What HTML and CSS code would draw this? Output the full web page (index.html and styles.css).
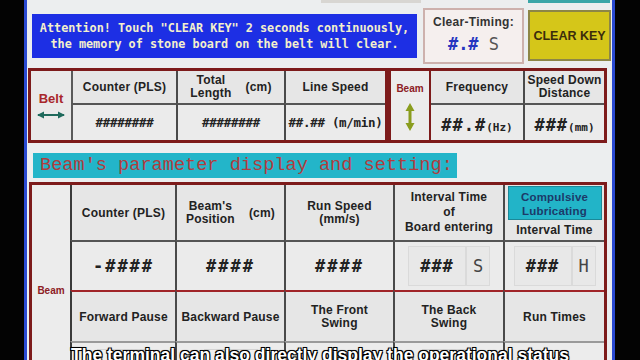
FILE: index.html
```html
<!DOCTYPE html>
<html lang="en">
<head>
    <meta charset="UTF-8">
    <meta name="viewport" content="width=device-width, initial-scale=1.0">
    <title>Belt and Beam Parameters</title>
    <link rel="stylesheet" href="styles.css">
</head>
<body>
    <div class="screen">
        <div class="top-strip">
            <span class="strip-grey"></span>
            <span class="strip-teal"></span>
        </div>

        <div class="top-row">
            <div class="banner">Attention! Touch "CLEAR KEY" 2 seconds continuously,<br>the memory of stone board on the belt will clear.</div>
            <div class="timing">
                <div class="timing-label">Clear-Timing:</div>
                <div class="timing-value"><span class="blue">#.#</span> S</div>
            </div>
            <div class="clear-key">CLEAR KEY</div>
        </div>

        <div class="belt-row">
            <div class="grid belt">
                <div class="cell side">
                    <span class="side-label">Belt</span>
                    <svg class="belt-arrow" width="30" height="8" viewBox="0 0 30 8">
                        <path d="M2 4 H28" stroke="#1f6a5c" stroke-width="2"/>
                        <path d="M1 4 L8 0.5 L8 7.5 Z M29 4 L22 0.5 L22 7.5 Z" fill="#1f6a5c"/>
                    </svg>
                </div>
                <div class="cell head">Counter (PLS)</div>
                <div class="cell head split"><span class="two-line">Total<br>Length</span><span>(cm)</span></div>
                <div class="cell head">Line Speed</div>
                <div class="cell val">########</div>
                <div class="cell val">########</div>
                <div class="cell val">##.## (m/min)</div>
            </div>

            <div class="grid beam-small">
                <div class="cell side red-side">
                    <span class="side-label small">Beam</span>
                    <svg class="beam-arrow" width="10" height="28" viewBox="0 0 10 28">
                        <path d="M5 3 V25" stroke="#8a9d1e" stroke-width="3"/>
                        <path d="M5 0 L9.5 8 L0.5 8 Z M5 28 L9.5 20 L0.5 20 Z" fill="#8a9d1e"/>
                    </svg>
                </div>
                <div class="cell head">Frequency</div>
                <div class="cell head two-line">Speed Down<br>Distance</div>
                <div class="cell val big">##.#<small>(Hz)</small></div>
                <div class="cell val big">###<small>(mm)</small></div>
            </div>
        </div>

        <div class="section-title">Beam's parameter display and setting:</div>

        <div class="grid beam">
            <div class="cell side beam-side"><span class="side-label small">Beam</span></div>

            <div class="cell head">Counter (PLS)</div>
            <div class="cell head split"><span class="two-line">Beam's<br>Position</span><span>(cm)</span></div>
            <div class="cell head two-line">Run Speed<br>(mm/s)</div>
            <div class="cell head three-line">Interval Time<br>of<br>Board entering</div>
            <div class="cell head lube-cell">
                <div class="lube">Compulsive<br>Lubricating</div>
                <div class="lube-caption">Interval Time</div>
            </div>

            <div class="cell num">-####</div>
            <div class="cell num">####</div>
            <div class="cell num">####</div>
            <div class="cell boxed">
                <span class="inset wide">###</span><span class="inset unit">S</span>
            </div>
            <div class="cell boxed">
                <span class="inset wide">###</span><span class="inset unit">H</span>
            </div>

            <div class="cell head red-top">Forward Pause</div>
            <div class="cell head red-top">Backward Pause</div>
            <div class="cell head red-top two-line">The Front<br>Swing</div>
            <div class="cell head red-top two-line">The Back<br>Swing</div>
            <div class="cell head red-top">Run Times</div>

            <div class="cell low"><span class="pad"></span></div>
            <div class="cell low"><span class="pad"></span></div>
            <div class="cell low"></div>
            <div class="cell low"><span class="pad"></span></div>
            <div class="cell low"></div>
        </div>
    </div>

    <div class="subtitle">The terminal can also directly display the operational status</div>
</body>
</html>
```

FILE: styles.css
```css
body {
    margin: 0;
    width: 640px;
    height: 360px;
    overflow: hidden;
    background-color: #030303;
    font-family: "Liberation Sans", Arial, sans-serif;
    position: relative;
}
.screen {
    margin-left: 24px;
    width: 591px;
    height: 360px;
    box-sizing: border-box;
    border-left: 3px solid #2a4ad2;
    border-right: 3px solid #2a4ad2;
    background-color: #eceeef;
    overflow: hidden;
}
.top-strip {
    display: flex;
    height: 3px;
}
.strip-grey {
    margin-left: 294px;
    width: 100px;
    background-color: #d8d6d2;
}
.strip-teal {
    margin-left: 107px;
    width: 82px;
    background-color: #3aa6a8;
}
.top-row {
    display: flex;
    align-items: center;
    height: 57px;
    margin-top: 4px;
}
.banner {
    margin-left: 5px;
    width: 385px;
    height: 44px;
    box-sizing: border-box;
    padding-top: 6px;
    background-color: #1d2fe4;
    color: #f4f0cc;
    font-family: "DejaVu Sans Mono", monospace;
    font-weight: bold;
    font-size: 11.8px;
    line-height: 16px;
    text-align: center;
    letter-spacing: 0;
    white-space: nowrap;
}
.timing {
    margin-left: 6px;
    width: 101px;
    height: 56px;
    box-sizing: border-box;
    border: 2px solid #cdb1ad;
    background-color: #f5efee;
    text-align: center;
    padding-top: 5px;
}
.timing-label {
    font-size: 12px;
    font-weight: bold;
    color: #333;
    letter-spacing: 0.3px;
}
.timing-value {
    margin-top: 5px;
    font-family: "DejaVu Sans Mono", monospace;
    font-size: 17px;
    color: #555;
}
.timing-value .blue {
    color: #2436c0;
    font-weight: bold;
}
.clear-key {
    margin-left: 4px;
    width: 83px;
    height: 51px;
    box-sizing: border-box;
    border: 2px solid #8d8646;
    background-color: #d5c619;
    color: #3b2c0c;
    font-size: 12.5px;
    font-weight: bold;
    display: flex;
    align-items: center;
    justify-content: center;
}
.belt-row {
    display: flex;
    margin-top: 4px;
    margin-left: 1px;
    height: 75px;
}
.grid {
    display: grid;
    box-sizing: border-box;
    border: 3px solid #7d1b1b;
    background-color: #e9e9e9;
}
.belt {
    width: 360px;
    grid-template-columns: 40px 105px 108px 1fr;
    grid-template-rows: 32px 1fr;
}
.beam-small {
    width: 219px;
    grid-template-columns: 40px 92px 1fr;
    grid-template-rows: 32px 1fr;
}
.cell {
    display: flex;
    align-items: center;
    justify-content: center;
    text-align: center;
    border-left: 2px solid #4a4a4a;
    border-top: 2px solid #555;
    color: #222;
    font-size: 12px;
    font-weight: bold;
    line-height: 12px;
}
.head {
    background-color: #e6e6e6;
    letter-spacing: 0.2px;
}
.belt .head, .beam-small .head, .beam > .cell:nth-child(-n+6) {
    border-top: none;
}
.side {
    grid-row: span 2;
    border: none;
    flex-direction: column;
    gap: 6px;
}
.side-label {
    color: #a8262a;
    font-size: 13px;
}
.side-label.small {
    font-size: 10px;
    color: #8c2024;
}
.red-side {
    border-right: 2px solid #7d1b1b;
    background-color: #ececec;
    justify-content: flex-start;
    padding-top: 12px;
    gap: 8px;
}
.beam-small .head:nth-child(2), .beam-small .val:nth-child(4) {
    border-left: none;
}
.belt .head:nth-child(2), .belt .val:nth-child(5) {
    border-left: 2px solid #5a5a5a;
}
.val {
    font-family: "DejaVu Sans Mono", monospace;
    font-size: 12.5px;
    letter-spacing: -0.3px;
    background-color: #ebebeb;
}
.val.big {
    font-size: 17px;
    letter-spacing: 1px;
    align-items: baseline;
    padding-top: 14px;
    justify-content: center;
}
.val.big small {
    font-size: 11px;
    letter-spacing: 0;
}
.split {
    gap: 14px;
}
.two-line, .three-line {
    line-height: 13px;
}
.three-line {
    line-height: 15px;
}
.section-title {
    margin-top: 10px;
    margin-left: 6px;
    width: 424px;
    height: 25px;
    box-sizing: border-box;
    padding-left: 7px;
    background-color: #23b5c9;
    color: #b23c3e;
    font-family: "Liberation Mono", "Courier New", monospace;
    font-size: 18.6px;
    line-height: 25px;
    white-space: nowrap;
}
.beam {
    margin-top: 4px;
    margin-left: 2px;
    width: 578px;
    height: 214px;
    grid-template-columns: 38px 105px 109px 109px 110px 1fr;
    grid-template-rows: 55px 50px 51px 1fr;
    border-bottom: none;
}
.beam-side {
    grid-row: span 4;
    background-color: #ececec;
    border-right: none;
}
.beam > .cell:nth-child(2), .beam > .cell:nth-child(7), .beam > .cell:nth-child(12), .beam > .cell:nth-child(17) {
    border-left: 2px solid #3a3a3a;
}
.lube-cell {
    flex-direction: column;
    justify-content: flex-start;
    padding-top: 1px;
}
.lube {
    width: 94px;
    height: 34px;
    box-sizing: border-box;
    background-color: #22b4c8;
    border: 1px solid #1b8898;
    color: #1c3a68;
    font-size: 11.5px;
    line-height: 14px;
    padding-top: 3px;
}
.lube-caption {
    margin-top: 4px;
}
.num {
    font-family: "DejaVu Sans Mono", monospace;
    font-size: 17px;
    letter-spacing: 2px;
    background-color: #ebebeb;
}
.boxed {
    gap: 0;
    background-color: #ebebeb;
}
.inset {
    height: 38px;
    display: flex;
    align-items: center;
    justify-content: center;
    border: 1px solid #dadada;
    background-color: #e8e8e8;
    font-family: "DejaVu Sans Mono", monospace;
    font-size: 17px;
}
.inset.wide {
    width: 56px;
    letter-spacing: 1px;
    font-weight: bold;
}
.inset.unit {
    width: 22px;
    font-weight: normal;
    color: #444;
}
.red-top {
    border-top: 2px solid #a02428;
}
.beam > .cell.red-top:nth-child(12) {
    border-top: 2px solid #a02428;
}
.low {
    border-top: 2px solid #9a9a9a;
    align-items: flex-start;
    padding-top: 6px;
    background-color: #ececec;
}
.pad {
    width: 52px;
    height: 30px;
    border: 1px solid #d4d4d4;
    background-color: #f0f0f0;
}
.subtitle {
    position: absolute;
    left: 0;
    right: 0;
    top: 345px;
    text-align: center;
    color: #fff;
    font-family: "Liberation Sans", Arial, sans-serif;
    font-weight: bold;
    font-size: 17.5px;
    letter-spacing: 0;
    white-space: nowrap;
    text-shadow: -1px -1px 0 #000, 1px -1px 0 #000, -1px 1px 0 #000, 1px 1px 0 #000, 0 0 2px #000;
}
```
